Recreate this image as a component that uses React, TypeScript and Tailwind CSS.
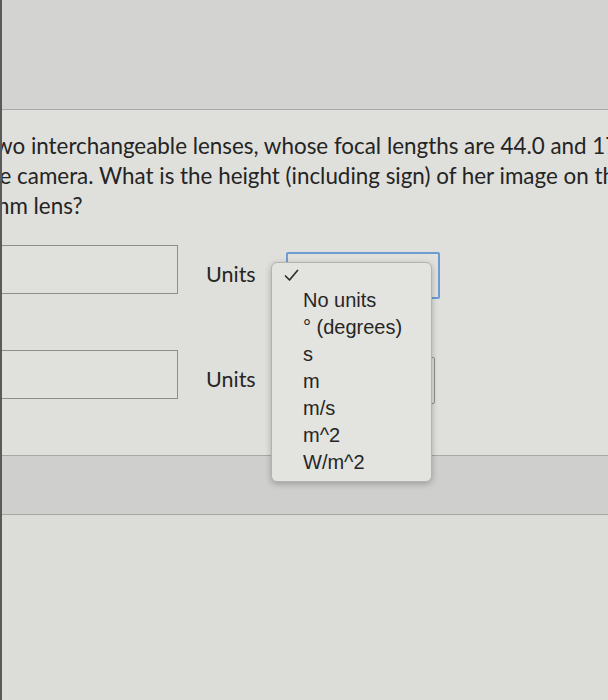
import { Fragment } from "react";

const UNITS = ["No units", "° (degrees)", "s", "m", "m/s", "m^2", "W/m^2"];

const LINES = [
  { text: "two interchangeable lenses, whose focal lengths are 44.0 and 170 mm", shift: "-ml-[13px]" },
  { text: "the camera. What is the height (including sign) of her image on the", shift: "-ml-[21px]" },
  { text: "mm lens?", shift: "-ml-[9px]" },
];

function AnswerRow({ focused, offset }: { focused?: boolean; offset: string }) {
  return (
    <div className={`flex items-start h-[49px] ${offset}`}>
      <div className="w-[180px] h-[49px] -ml-[2px] border border-[#8d8d8a] bg-[#e0e0dc]" />
      <span className="ml-[28px] mt-[17px] text-[21.5px] leading-[24px] text-[#262626]">Units</span>
      <div
        className={`ml-[30px] mt-[7px] h-[47px] rounded-[2px] bg-[#e0e0dc] ${
          focused ? "w-[154px] border-2 border-[#6e9bd0]" : "w-[149px] border border-[#8d8d8a]"
        }`}
      />
    </div>
  );
}

export default function App() {
  return (
    <div
      className="relative w-[608px] h-[700px] overflow-hidden bg-[#dcdcd9] text-[#242424]"
      style={{ fontFamily: "Lato, 'Open Sans', sans-serif" }}
    >
      {/* top bar */}
      <div className="h-[110px] bg-[#d3d3d1] border-b border-[#a9aaa8]" />

      {/* question */}
      <div className="h-[345px] bg-[#dfdfdb] pt-[21px]">
        <div className="text-[22.4px] leading-[30px] whitespace-nowrap">
          {LINES.map((l) => (
            <div key={l.text} className={l.shift}>{l.text}</div>
          ))}
        </div>
        <AnswerRow focused offset="mt-[24px]" />
        <AnswerRow offset="mt-[56px]" />
      </div>

      {/* grey band */}
      <div className="h-[60px] bg-[#cfd0ce] border-t border-b border-[#a7a8a6]" />

      {/* left edge */}
      <div className="absolute left-0 top-0 w-[2px] h-full bg-[#5a5a58]" />

      {/* open dropdown */}
      <div className="absolute left-[271px] top-[262px] w-[161px] h-[220px] rounded-[6px] border border-[#b3b3b0] bg-[#e3e3df] shadow-[0_2px_6px_rgba(0,0,0,0.25)]">
        <div className="h-[24px] pl-[12px] flex items-center">
          <svg width="15" height="13" viewBox="0 0 15 13" fill="none">
            <path d="M1.5 7 L5.5 11 L13.5 1.5" stroke="#2e2e2e" strokeWidth="1.7" strokeLinecap="round" strokeLinejoin="round" />
          </svg>
        </div>
        {UNITS.map((u) => (
          <Fragment key={u}>
            <div
              className="h-[27px] pl-[31px] text-[20px] leading-[27px] text-[#262626]"
              style={{ fontFamily: "'Liberation Sans', Arial, sans-serif" }}
            >
              {u}
            </div>
          </Fragment>
        ))}
      </div>
    </div>
  );
}
